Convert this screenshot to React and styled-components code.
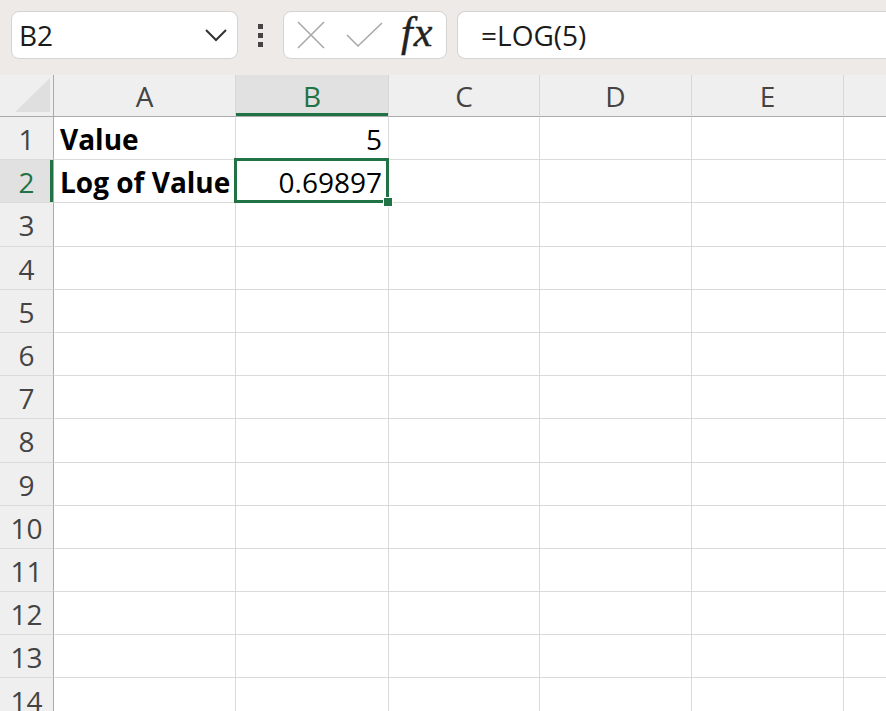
import React from "react";
import styled, { createGlobalStyle } from "styled-components";

const Global = createGlobalStyle`
  html, body { margin: 0; padding: 0; background: #fff; overflow: hidden; }
  body { font-family: "Open Sans", "Noto Sans", sans-serif; }
`;

const GREEN = "#217346";
const COLS = [
  { key: "A", w: 182 },
  { key: "B", w: 153 },
  { key: "C", w: 151 },
  { key: "D", w: 152 },
  { key: "E", w: 152 },
  { key: "F", w: 60 },
];
const ROW_H = 43.2;
const FS = "28px";

const Page = styled.div`
  width: 886px;
  height: 711px;
  overflow: hidden;
  display: flex;
  flex-direction: column;
`;

const Toolbar = styled.div`
  height: 75px;
  flex: none;
  background: #eeeae8;
  display: flex;
  align-items: flex-start;
  padding: 11px 0 0 11px;
  box-sizing: border-box;
`;

const Box = styled.div`
  height: 48px;
  box-sizing: border-box;
  background: #fff;
  border: 1px solid #d6d4d2;
  border-radius: 8px;
  display: flex;
  align-items: center;
`;

const NameBox = styled(Box)`
  width: 227px;
  padding: 0 9px 0 7px;
  justify-content: space-between;
  font-size: ${FS};
  color: #1b1b1b;
`;

const Dots = styled.div`
  width: 45px;
  height: 48px;
  display: flex;
  flex-direction: column;
  align-items: center;
  justify-content: center;
  gap: 4px;
  & > span {
    width: 5px;
    height: 5px;
    background: #444;
    display: block;
  }
`;

const FxBox = styled(Box)`
  width: 164px;
  padding: 0 0 0 13px;
`;

const IconSlot = styled.span`
  display: flex;
  margin-right: ${(p) => p.$gap}px;
`;

const Fx = styled.span`
  font-family: "Liberation Serif", "DejaVu Serif", serif;
  font-style: italic;
  font-size: 42px;
  color: #222;
  line-height: 1;
  margin-top: -6px;
  letter-spacing: 1px;
  -webkit-text-stroke: 0.4px #222;
`;

const FormulaBox = styled(Box)`
  margin-left: 10px;
  flex: 1;
  border-right: none;
  border-radius: 8px 0 0 8px;
  padding-left: 23px;
  font-size: ${FS};
  color: #1b1b1b;
`;

const Grid = styled.div`
  display: grid;
  grid-template-columns: 54px ${COLS.map((c) => c.w + "px").join(" ")};
  grid-auto-rows: ${ROW_H}px;
  grid-template-rows: 42px;
`;

const Corner = styled.div`
  background: #efefef;
  border-bottom: 1px solid #ababab;
  border-right: 1px solid #ababab;
  box-sizing: border-box;
  position: relative;
  &::after {
    content: "";
    position: absolute;
    right: 3px;
    bottom: 4px;
    width: 35px;
    height: 34px;
    background: #dfdfdf;
    clip-path: polygon(100% 0, 100% 100%, 0 100%);
  }
`;

const ColHead = styled.div`
  background: ${(p) => (p.$sel ? "#e1e1e1" : "#efefef")};
  border-right: 1px solid #d8d8d8;
  border-bottom: 1px solid #ababab;
  box-sizing: border-box;
  display: flex;
  align-items: center;
  justify-content: center;
  font-size: ${FS};
  color: ${(p) => (p.$sel ? GREEN : "#444")};
  padding-top: 1px;
  box-shadow: ${(p) => (p.$sel ? `inset 0 -3px 0 ${GREEN}` : "none")};
`;

const RowHead = styled.div`
  background: ${(p) => (p.$sel ? "#e1e1e1" : "#efefef")};
  border-right: 1px solid #ababab;
  border-bottom: 1px solid #dadada;
  box-sizing: border-box;
  display: flex;
  align-items: center;
  justify-content: center;
  font-size: ${FS};
  color: ${(p) => (p.$sel ? GREEN : "#444")};
  padding-top: 2px;
  box-shadow: ${(p) => (p.$sel ? `inset -3px 0 0 ${GREEN}` : "none")};
`;

const Cell = styled.div`
  position: relative;
  z-index: ${(p) => (p.$front ? 2 : "auto")};
  border-right: 1px solid #dadada;
  border-bottom: 1px solid #dadada;
  box-sizing: border-box;
  display: flex;
  align-items: center;
  justify-content: ${(p) => (p.$right ? "flex-end" : "flex-start")};
  padding: 2px 6px 0 6px;
  font-size: ${FS};
  font-weight: ${(p) => (p.$bold ? 700 : 400)};
  color: #000;
  white-space: nowrap;
`;

const Selection = styled.div`
  position: absolute;
  left: -2px;
  top: -2px;
  right: -1px;
  bottom: -1px;
  border: 3px solid ${GREEN};
  pointer-events: none;
`;

const Handle = styled.div`
  position: absolute;
  right: -6px;
  bottom: -6px;
  width: 8px;
  height: 8px;
  background: ${GREEN};
  outline: 1px solid #fff;
`;

const data = {
  1: { A: { v: "Value", bold: true }, B: { v: "5", right: true } },
  2: { A: { v: "Log of Value", bold: true }, B: { v: "0.69897", right: true, sel: true } },
};

export default function App() {
  const rows = Array.from({ length: 14 }, (_, i) => i + 1);
  return (
    <Page>
      <Global />
      <Toolbar>
        <NameBox>
          <span>B2</span>
          <svg width="24" height="14" viewBox="0 0 24 14">
            <path d="M2 2 L12 12 L22 2" fill="none" stroke="#333" strokeWidth="2" />
          </svg>
        </NameBox>
        <Dots>
          <span />
          <span />
          <span />
        </Dots>
        <FxBox>
          <IconSlot $gap={21}>
            <svg width="28" height="28" viewBox="0 0 28 28">
              <path d="M1 1 L27 27 M27 1 L1 27" stroke="#a9a9a9" strokeWidth="1.6" fill="none" />
            </svg>
          </IconSlot>
          <IconSlot $gap={18}>
            <svg width="37" height="26" viewBox="0 0 37 26">
              <path d="M1 13 L12 24 L36 1" stroke="#a9a9a9" strokeWidth="1.6" fill="none" />
            </svg>
          </IconSlot>
          <Fx>fx</Fx>
        </FxBox>
        <FormulaBox>=LOG(5)</FormulaBox>
      </Toolbar>
      <Grid>
        <Corner />
        {COLS.map((c) => (
          <ColHead key={c.key} $sel={c.key === "B"}>
            {c.key === "F" ? "" : c.key}
          </ColHead>
        ))}
        {rows.map((r) => (
          <React.Fragment key={r}>
            <RowHead $sel={r === 2}>{r}</RowHead>
            {COLS.map((c) => {
              const d = (data[r] || {})[c.key];
              return (
                <Cell key={c.key} $bold={d?.bold} $right={d?.right} $front={d?.sel}>
                  {d?.v}
                  {d?.sel && (
                    <Selection>
                      <Handle />
                    </Selection>
                  )}
                </Cell>
              );
            })}
          </React.Fragment>
        ))}
      </Grid>
    </Page>
  );
}
